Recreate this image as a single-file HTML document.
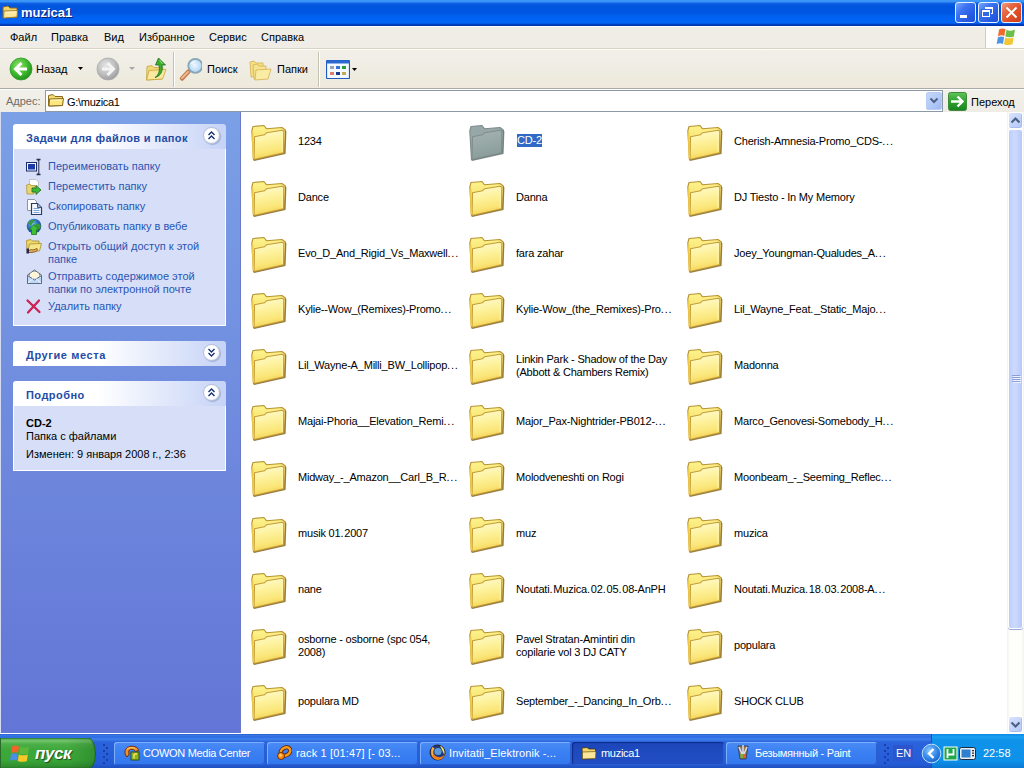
<!DOCTYPE html>
<html><head><meta charset="utf-8">
<style>
*{margin:0;padding:0;box-sizing:border-box}
html,body{width:1024px;height:768px;overflow:hidden;background:#fff;font-family:"Liberation Sans",sans-serif;font-size:11px;color:#000}
.a{position:absolute}
#title{left:0;top:0;width:1024px;height:26px;background:linear-gradient(#3d98f8 0px,#3a94f8 1.5px,#0e60e2 3.5px,#0055de 6px,#0056e2 13px,#0062f2 17px,#0064f6 23px,#0040c0 24.5px,#0030a0 26px)}
#title .t{left:21px;top:5px;color:#fff;font-weight:bold;font-size:13px;text-shadow:1px 1px 0 #0a1e6a}
.tb{top:2px;width:21px;height:21px;border:1px solid #e6f0ff;border-radius:3px;background:linear-gradient(135deg,#7aa6fa 0%,#3c74f2 35%,#2a60e6 65%,#1d4fd4 100%)}
#menu{left:0;top:26px;width:1024px;height:22px;background:#efede5;border-top:1px solid #fafcff}
#menu span{position:absolute;top:3.5px;font-size:11px;line-height:13px}
#logo{left:985px;top:27px;width:39px;height:21px;background:#fdfdfc;border-left:1px solid #cfccc0}
#tool{left:0;top:48px;width:1024px;height:41px;background:linear-gradient(#f1efe8,#efede3 50%,#eeeadc 85%,#f0e8dc)}
#addr{left:0;top:90px;width:1024px;height:22px;background:linear-gradient(#f1f0ea,#eeece4)}
#left{left:0;top:112px;width:241px;height:621px;background:linear-gradient(#7ba0e6,#6375d6)}
#files{left:241px;top:112px;width:766px;height:621px;background:#fff}
#sb{left:1007px;top:112px;width:17px;height:621px;background:linear-gradient(90deg,#f3f1ec,#fefefb 3px,#fefefb 14px,#f3f1ec)}
.sbb{left:1008px;width:15px;border:1px solid #fff;border-radius:3px;background:linear-gradient(135deg,#d8e4fe,#c1d2fb 60%,#b4c8f7);box-shadow:inset -1px -1px 0 #a9bdf0}
.sbt{left:1008px;width:15px;border:1px solid #fff;border-radius:3px;background:linear-gradient(90deg,#bccdfa,#cdd9fd 40%,#c8d6fd 60%,#b6c8f8);box-shadow:0 1px 0 #98a8d8}
#task{left:0;top:734px;width:1024px;height:34px;background:linear-gradient(#1f4fc4 0,#3c7ce8 1px,#2d6ae0 3px,#3f82ee 5px,#2b63dc 8px,#245cd8 30px,#1e4fbe 34px)}
.tt{top:63px;line-height:13px;white-space:nowrap}
.hd{width:213px;height:25px;background:linear-gradient(90deg,#fff 0%,#fff 40%,#c6d3f7 100%);border-radius:3px 3px 0 0}
.ht{left:26px;color:#1f4ba6;font-size:11px;font-weight:bold;line-height:13px;white-space:nowrap;letter-spacing:0.4px}
.bd{width:213px;background:#d6dff7;border:1px solid #fff;border-top:none}
.chev{width:17px;height:17px;border-radius:50%;background:radial-gradient(circle at 40% 35%,#fff 50%,#eef1fa);border:1px solid #b4bdd8;box-shadow:1px 1px 1px #a0acd0}
.chev svg{margin:-1px}
.chev svg{position:absolute;left:0;top:0}
.lk{left:48px;color:#2a55b4;font-size:11px;line-height:13px;white-space:nowrap}
.dt{left:26px;color:#000;font-size:11px;line-height:13px;white-space:nowrap}
.it{position:absolute;width:218px;height:56px}
.it svg{position:absolute;left:0;top:9px}
.it i{font-style:normal;letter-spacing:0.8px}
.sel{background:#316ac5;color:#fff;padding:0 0.5px;margin-left:0.5px;margin-top:-0.7px;letter-spacing:-0.45px}
.it .n{position:absolute;left:50px;line-height:13px;white-space:nowrap;letter-spacing:-0.2px}
.tk{top:742px;height:23px;border-radius:3px;background:linear-gradient(#4a8cf6,#3c81f3 40%,#3377ee);color:#fff;font-size:11px;box-shadow:inset 1px 1px 0 #7cb0ff,inset -1px -1px 0 #2a5fd0}
.act{background:linear-gradient(#1c45b8,#1e4cc0 50%,#2250c4);box-shadow:inset 1px 1px 1px #0e2a88,inset -1px -1px 0 #2c5cd0}
.tk span{position:absolute;left:29px;top:4.7px;line-height:13px;white-space:nowrap;letter-spacing:-0.3px}
</style></head><body>
<svg width="0" height="0" style="position:absolute">
<defs>
<linearGradient id="gy" x1="0" y1="0" x2="0.2" y2="1">
<stop offset="0" stop-color="#fffbd4"/><stop offset="0.45" stop-color="#fdf29c"/><stop offset="0.8" stop-color="#fae578"/><stop offset="1" stop-color="#f4d455"/></linearGradient>
<linearGradient id="gb" x1="0" y1="0" x2="0" y2="1">
<stop offset="0" stop-color="#fdf28a"/><stop offset="1" stop-color="#f2d45a"/></linearGradient>
<g id="f">
<path d="M5,4.5 L16,3.5 L18.6,6.8 L34,5.5 L37.5,8.2 L36.5,31 L5.5,38 L3.8,9 Z" fill="url(#gb)" stroke="#b89232" stroke-width="1.1" stroke-linejoin="round"/>
<path d="M6.5,14.8 L16.4,12.8 L18.6,10.7 L34,8.2 L35.8,9 L35.5,30.8 L6,37.5 Z" fill="url(#gy)" stroke="#c49c38" stroke-width="1.1" stroke-linejoin="round"/>
<path d="M4.6,10 L5.3,36.5" stroke="#eccb48" stroke-width="1.6"/>
<path d="M34.2,10 L34,30" stroke="#fff6c0" stroke-width="0.8"/>
<path d="M36.8,9 L37.8,9.5 L37,31.5 L6,38.5" fill="none" stroke="#8a7034" stroke-width="1.2" opacity="0.85"/>
</g>
<linearGradient id="ggy" x1="0" y1="0" x2="0.25" y2="1">
<stop offset="0" stop-color="#a5b4b4"/><stop offset="1" stop-color="#8a9d9a"/></linearGradient>
<g id="fg">
<path d="M5,4.5 L16,3.5 L18.6,6.8 L34,5.5 L37.5,8.2 L36.5,31 L5.5,38 L3.8,9 Z" fill="#98a8a8" stroke="#7c8a8a" stroke-width="1.1" stroke-linejoin="round"/>
<path d="M6.5,14.8 L16.4,12.8 L18.6,10.7 L34,8.2 L35.8,9 L35.5,30.8 L6,37.5 Z" fill="url(#ggy)" stroke="#7f8e8c" stroke-width="1.1" stroke-linejoin="round"/>
<path d="M36.5,9 L37.8,9.5 L37,31.5 L6,38.5" fill="none" stroke="#6a7474" stroke-width="1.2" opacity="0.8"/>
</g>
</defs></svg>

<div id="title" class="a">
  <svg class="a" style="left:1px;top:4px" width="18" height="16" viewBox="0 0 18 16">
<path d="M2,3 L7,2 L9,4 L16,4 L16,13 L2,14 Z" fill="#f3d466" stroke="#8a6420" stroke-width="1"/>
<path d="M2.5,14 L3,7 L16.5,6.5 L16,13 Z" fill="#fbe898" stroke="#a07a28" stroke-width="0.9"/>
<path d="M4,8.5 L15,8" stroke="#fff6c8" stroke-width="1"/>
</svg>
  <div class="a t">muzica1</div>
  <div class="a tb" style="left:955px"></div>
  <div class="a" style="left:960px;top:15px;width:7px;height:3px;background:#fff"></div>
  <div class="a tb" style="left:978px"></div>
  <div class="a" style="left:985px;top:7px;width:8px;height:7px;border:1px solid #fff;border-top-width:2px"></div>
  <div class="a" style="left:982px;top:10px;width:8px;height:7px;border:1px solid #fff;border-top-width:2px;background:#3068e8;box-shadow:0 0 0 1px #3068e8"></div>
  <div class="a tb" style="left:1001px;background:linear-gradient(135deg,#f0a088 0%,#e76a44 30%,#e0502a 60%,#c8401c 100%)"></div>
  <svg class="a" style="left:1001px;top:2px" width="21" height="21"><path d="M5.5,5.5 L15.5,15.5 M15.5,5.5 L5.5,15.5" stroke="#fff" stroke-width="2"/></svg>
</div>

<div id="menu" class="a">
  <span style="left:10px">Файл</span>
  <span style="left:51px">Правка</span>
  <span style="left:104px">Вид</span>
  <span style="left:139px">Избранное</span>
  <span style="left:209px">Сервис</span>
  <span style="left:261px">Справка</span>
</div>
<div id="logo" class="a"></div>
<svg class="a" style="left:995px;top:27px" width="22" height="20" viewBox="0 0 22 20">
<path d="M4,2.5 C6.5,1 8.5,1.2 10.5,2.3 L9.3,9 C7.3,8 5.3,8 3,9.5 Z" fill="#f06a30"/>
<path d="M11.5,2.8 C14,4 16.5,4 20,2.5 L18.8,9.5 C16,10.7 13,10.5 10.3,9.5 Z" fill="#6cc04a"/>
<path d="M2.8,10.5 C5,9.2 7.2,9.1 9.1,10.1 L8,17 C6,16 3.8,16 1.7,17.3 Z" fill="#4c94e8"/>
<path d="M10.1,10.5 C12.8,11.6 15.6,11.7 18.6,10.5 L17.5,17.3 C14.5,18.5 11.7,18.3 9,17.2 Z" fill="#f4c634"/>
</svg>

<div id="tool" class="a"></div>
<div class="a" style="left:0;top:48px;width:1024px;height:1px;background:#d5d2c6"></div>
<div class="a" style="left:0;top:49px;width:1024px;height:1px;background:#fefdf6"></div>
<div class="a" style="left:0;top:88px;width:1024px;height:1px;background:#a9aba6"></div>
<div class="a" style="left:0;top:89px;width:1024px;height:1px;background:#fefefc"></div>
<!-- back -->
<svg class="a" style="left:9px;top:57px" width="24" height="24" viewBox="0 0 24 24">
<defs><radialGradient id="gg" cx="0.4" cy="0.35" r="0.7"><stop offset="0" stop-color="#8fe36a"/><stop offset="0.6" stop-color="#3cb72c"/><stop offset="1" stop-color="#1f8a1c"/></radialGradient>
<radialGradient id="gr" cx="0.4" cy="0.35" r="0.7"><stop offset="0" stop-color="#e6e6e6"/><stop offset="0.6" stop-color="#bdbdbd"/><stop offset="1" stop-color="#9a9a9a"/></radialGradient></defs>
<circle cx="12" cy="12" r="11" fill="url(#gg)" stroke="#2f9a28" stroke-width="0.8"/>
<path d="M12.5,6 L6.5,12 L12.5,18 M7,12 L18,12" fill="none" stroke="#fff" stroke-width="3" stroke-linecap="butt"/>
</svg>
<div class="a tt" style="left:36px">Назад</div>
<svg class="a" style="left:78px;top:67px" width="6" height="4"><path d="M0,0 L5,0 L2.5,3 Z" fill="#000"/></svg>
<!-- forward -->
<svg class="a" style="left:96px;top:57px" width="24" height="24" viewBox="0 0 24 24">
<circle cx="12" cy="12" r="11" fill="url(#gr)" stroke="#a9a9a9" stroke-width="0.8"/>
<path d="M11.5,6 L17.5,12 L11.5,18 M17,12 L6,12" fill="none" stroke="#f4f4f4" stroke-width="3"/>
</svg>
<svg class="a" style="left:129px;top:67px" width="7" height="4"><path d="M0,0 L6,0 L3,3 Z" fill="#a6a6a6"/></svg>
<!-- up -->
<svg class="a" style="left:145px;top:57px" width="22" height="24" viewBox="0 0 22 24">
<path d="M2,9.5 L7,8.5 L9,10.5 L18,10.5 L17,22 L1.5,23 Z" fill="#f0d878" stroke="#c8a33a" stroke-width="0.8"/>
<path d="M1.5,23 L4,13.5 L21,12.5 L17.5,22 Z" fill="#f9e9a0" stroke="#c8a33a" stroke-width="0.8"/>
<path d="M6.5,14 L12,13.5" stroke="#e8c860" stroke-width="0.8"/>
<path d="M10,20.5 C14,18 15,13 14,8 L10.5,8 L13.5,1 L20.5,8 L17,8 C18,14 16,19 10,20.5 Z" fill="#3cad2e" stroke="#1c6e1a" stroke-width="0.8" stroke-linejoin="round"/>
<path d="M14.5,3 L17.5,7" stroke="#8ee07a" stroke-width="1"/>
</svg>
<div class="a" style="left:173px;top:52px;width:1px;height:35px;background:#c5c2b2"></div>
<div class="a" style="left:174px;top:52px;width:1px;height:35px;background:#fff"></div>
<!-- search -->
<svg class="a" style="left:178px;top:56px" width="24" height="26" viewBox="0 0 24 26">
<defs><radialGradient id="lens" cx="0.45" cy="0.45" r="0.6"><stop offset="0" stop-color="#eef8ff"/><stop offset="1" stop-color="#a6d2f2"/></radialGradient></defs>
<path d="M4,22.5 L10.5,15.5" stroke="#c27c50" stroke-width="4.4" stroke-linecap="round"/>
<path d="M4,22 L10,15.8" stroke="#f0bc94" stroke-width="1.8" stroke-linecap="round"/>
<circle cx="17.3" cy="9.8" r="7" fill="url(#lens)" stroke="#8aa4b8" stroke-width="1.8"/>
<path d="M13.5,8 C14,6.5 15.5,5.5 17,5.5" fill="none" stroke="#fff" stroke-width="1.2"/>
</svg>
<div class="a tt" style="left:207px">Поиск</div>
<!-- folders -->
<svg class="a" style="left:249px;top:59px" width="24" height="22" viewBox="0 0 24 22">
<path d="M1,3 L5,2 L7,4 L14,4 L14,16 L2,18 Z" fill="#f5df86" stroke="#d2b150" stroke-width="0.8"/>
<path d="M4,6 L8,5 L10,7 L17,7 L17,19 L5,20 Z" fill="#f7e38f" stroke="#d2b150" stroke-width="0.8"/>
<path d="M6,21 L7,11 L22,10 L19,20 Z" fill="#fbeca4" stroke="#d2b150" stroke-width="0.8"/>
</svg>
<div class="a tt" style="left:277px">Папки</div>
<div class="a" style="left:318px;top:52px;width:1px;height:35px;background:#c5c2b2"></div>
<div class="a" style="left:319px;top:52px;width:1px;height:35px;background:#fff"></div>
<!-- views -->
<svg class="a" style="left:326px;top:60px" width="24" height="19" viewBox="0 0 24 19">
<rect x="0.5" y="0.5" width="23" height="18" rx="1" fill="#f4f8ff" stroke="#1f5ac4" stroke-width="1.2"/>
<rect x="0.5" y="0.5" width="23" height="3" fill="#2a68d0"/>
<rect x="4" y="6" width="4" height="3" fill="#9aa2b6"/><rect x="10" y="6" width="4" height="3" fill="#3574d6"/><rect x="16" y="6" width="4" height="3" fill="#2a9a3a"/>
<rect x="4" y="12" width="4" height="3" fill="#e07c6c"/><rect x="10" y="12" width="4" height="3" fill="#1c3a8c"/><rect x="16" y="12" width="4" height="3" fill="#c0aa5a"/>
</svg>
<svg class="a" style="left:352px;top:68px" width="6" height="4"><path d="M0,0 L5,0 L2.5,3 Z" fill="#000"/></svg>
<div id="addr" class="a"></div>
<div class="a" style="left:6px;top:94.8px;color:#6f6d66;line-height:13px">Адрес:</div>
<div class="a" style="left:45px;top:90px;width:898px;height:22px;background:#fff;border:1px solid #8c98a4"></div>
<svg class="a" style="left:47px;top:93px" width="18" height="15" viewBox="0 0 18 15">
<path d="M1.5,2.5 L6,1.5 L8,3.5 L15.5,3.5 L15.5,12.5 L1.5,13 Z" fill="#f6dc70" stroke="#8a6a20" stroke-width="1"/>
<path d="M2,13 L2.5,6 L16.5,5.5 L15.5,12.5 Z" fill="#fbe680" stroke="#8a6a20" stroke-width="1"/>
<path d="M3.5,7.3 L14.5,7" stroke="#fff8c0" stroke-width="1"/>
</svg>
<div class="a" style="left:67px;top:95.7px;line-height:13px;letter-spacing:-0.3px">G:\muzica1</div>
<div class="a" style="left:926px;top:92px;width:16px;height:18px;border-radius:2px;background:linear-gradient(135deg,#c4d7fb,#b0c8f6 60%,#9cb8f0);border:1px solid #b9ccf3"></div>
<svg class="a" style="left:929px;top:97px" width="10" height="8"><path d="M1.5,1.5 L5,5 L8.5,1.5" fill="none" stroke="#4d6185" stroke-width="2"/></svg>
<svg class="a" style="left:948px;top:92px" width="20" height="19" viewBox="0 0 20 19">
<defs><linearGradient id="go" x1="0" y1="0" x2="0" y2="1"><stop offset="0" stop-color="#5fc45a"/><stop offset="0.5" stop-color="#2ea12c"/><stop offset="1" stop-color="#1b8420"/></linearGradient></defs>
<rect x="0.5" y="0.5" width="18" height="18" rx="2" fill="url(#go)" stroke="#3a8c3a" stroke-width="1"/>
<path d="M3,9.5 L14,9.5 M9.5,4.5 L14.5,9.5 L9.5,14.5" fill="none" stroke="#fff" stroke-width="2.4"/>
</svg>
<div class="a" style="left:971px;top:95.7px;line-height:13px">Переход</div>

<div id="left" class="a"></div>
<div class="a" style="left:0;top:112px;width:1px;height:621px;background:#d4dcf2"></div>
<!-- box1 -->
<div class="a hd" style="left:13px;top:124px"></div>
<div class="a ht" style="top:132px;letter-spacing:0.36px">Задачи для файлов и папок</div>
<div class="a chev" style="left:203px;top:127px"><svg width="17" height="17"><path d="M5.5,8 L8.5,5 L11.5,8 M5.5,12 L8.5,9 L11.5,12" fill="none" stroke="#142f70" stroke-width="1.35"/></svg></div>
<div class="a bd" style="left:13px;top:149px;height:177px"></div>
<div class="a lk" style="top:159.7px">Переименовать папку</div>
<div class="a lk" style="top:179.7px">Переместить папку</div>
<div class="a lk" style="top:199.7px">Скопировать папку</div>
<div class="a lk" style="top:220px">Опубликовать папку в вебе</div>
<div class="a lk" style="top:240px">Открыть общий доступ к этой<br>папке</div>
<div class="a lk" style="top:270.3px">Отправить содержимое этой<br>папки по электронной почте</div>
<div class="a lk" style="top:300px">Удалить папку</div>
<!-- task icons -->
<svg class="a" style="left:25px;top:158px" width="18" height="18" viewBox="0 0 18 18">
<rect x="1.5" y="4.5" width="10" height="8.5" fill="#f4f6ff" stroke="#1a2a6a" stroke-width="1"/>
<rect x="3" y="6" width="7" height="5.5" fill="#1c3aa8"/>
<path d="M11.5,1.5 L15.5,1.5 M13.5,1.5 L13.5,16.5 M11.5,16.5 L15.5,16.5" stroke="#2a3050" stroke-width="1.6"/>
<path d="M12.8,3 L12.8,15" stroke="#fff" stroke-width="0.8"/>
</svg>
<svg class="a" style="left:25px;top:178px" width="18" height="18" viewBox="0 0 18 18">
<path d="M4.5,1.5 L11,1.5 L13.5,4 L13.5,8 L4.5,8 Z" fill="#fff" stroke="#b8b8c0" stroke-width="0.8"/>
<path d="M1.5,7 L5,6 L6,7.5 L10,7.5 L9,16 L2,16 Z" fill="#e8d470" stroke="#b09a38" stroke-width="0.8"/>
<path d="M7,10 L11,10 L11,7.5 L16,12 L11,16.5 L11,14 L7,14 Z" fill="#3cb83a" stroke="#1f6a1c" stroke-width="0.8"/>
</svg>
<svg class="a" style="left:26px;top:198px" width="17" height="18" viewBox="0 0 17 18">
<path d="M1.5,1.5 L8.5,1.5 L10.5,3.5 L10.5,12.5 L1.5,12.5 Z" fill="#fff" stroke="#8a96a8" stroke-width="1"/>
<path d="M5.5,5.5 L11.5,5.5 L15.5,9.5 L15.5,16.5 L5.5,16.5 Z" fill="#f4f8ff" stroke="#2a3a60" stroke-width="1.2"/>
<path d="M11.5,5.5 L11.5,9.5 L15.5,9.5" fill="#9ab0d8" stroke="#2a3a60" stroke-width="0.8"/>
<path d="M7.5,10.5 H13.5 M7.5,12.5 H13.5 M7.5,14.5 H13.5" stroke="#6a9ad8" stroke-width="0.9"/>
</svg>
<svg class="a" style="left:26px;top:218px" width="17" height="18" viewBox="0 0 17 18">
<defs><radialGradient id="glb" cx="0.4" cy="0.35" r="0.7"><stop offset="0" stop-color="#7ac2f0"/><stop offset="0.5" stop-color="#2a70c0"/><stop offset="1" stop-color="#14408a"/></radialGradient></defs>
<circle cx="8" cy="8" r="7.3" fill="url(#glb)"/>
<path d="M2,5 C4,2 7,1.5 9,2 C8,4 6,5 5,8 C4,7 3,6 2,5 Z M10,6 C12,5 14,6 15,8 C14,11 12,13 10,14 C11,11 10,9 10,6 Z" fill="#3a9a3a"/>
<path d="M8,6.5 L13,11.5 L10.5,11.5 L10.5,16.5 L5.5,16.5 L5.5,11.5 L3,11.5 Z" fill="#3fbe38" stroke="#1a7a1a" stroke-width="0.8"/>
</svg>
<svg class="a" style="left:25px;top:238px" width="18" height="16" viewBox="0 0 18 16">
<path d="M1.5,2.5 L6,1.5 L7.5,3 L14,3 L14,12 L2,13 Z" fill="#eed868" stroke="#a88a30" stroke-width="0.8"/>
<path d="M3,13 L4.5,6 L16.5,5.5 L14.5,13 Z" fill="#f6e68a" stroke="#a88a30" stroke-width="0.8"/>
<path d="M2,14.5 C4,12 6,11 8,12 L12,10.5 C13,11.5 12,13 11,13.5 L7,14.5 Z" fill="#e4b060" stroke="#7a4a10" stroke-width="0.8"/>
<rect x="1.5" y="10.5" width="2.5" height="5" fill="#2a2a50"/>
</svg>
<svg class="a" style="left:26px;top:268px" width="17" height="17" viewBox="0 0 17 17">
<path d="M3,7 L8.5,3 L14,7 Z" fill="#f0e0b0" stroke="#8a7a5a" stroke-width="0.7"/>
<rect x="4" y="4" width="9" height="6" fill="#fff6d8"/>
<path d="M1.5,7 L8.5,2 L15.5,7 L15.5,15.5 L1.5,15.5 Z" fill="none" stroke="#5a6a8a" stroke-width="1"/>
<path d="M1.5,7.5 L8.5,12 L15.5,7.5 L15.5,15.5 L1.5,15.5 Z" fill="#c0d8f4" stroke="#5a6a8a" stroke-width="1"/>
<path d="M2,15 L7,10.5 M15,15 L10,10.5" stroke="#f0f8ff" stroke-width="1"/>
</svg>
<svg class="a" style="left:25px;top:298px" width="17" height="17" viewBox="0 0 17 17">
<path d="M2.5,2.5 L14.5,14 M14,2.5 L3,14.5" stroke="#c01848" stroke-width="2.2" stroke-linecap="round"/>
<path d="M2.5,2.5 L14.5,14 M14,2.5 L3,14.5" stroke="#e0306a" stroke-width="0.8" stroke-linecap="round"/>
</svg>
<!-- box2 -->
<div class="a hd" style="left:13px;top:341px"></div>
<div class="a ht" style="top:349px;letter-spacing:0.6px">Другие места</div>
<div class="a chev" style="left:203px;top:344px"><svg width="17" height="17"><path d="M5.5,5 L8.5,8 L11.5,5 M5.5,9 L8.5,12 L11.5,9" fill="none" stroke="#142f70" stroke-width="1.35"/></svg></div>
<!-- box3 -->
<div class="a hd" style="left:13px;top:381px"></div>
<div class="a ht" style="top:388.5px;letter-spacing:0.45px">Подробно</div>
<div class="a chev" style="left:203px;top:384px"><svg width="17" height="17"><path d="M5.5,8 L8.5,5 L11.5,8 M5.5,12 L8.5,9 L11.5,12" fill="none" stroke="#142f70" stroke-width="1.35"/></svg></div>
<div class="a bd" style="left:13px;top:406px;height:65px"></div>
<div class="a dt" style="top:416.7px;font-weight:bold">CD-2</div>
<div class="a dt" style="top:429.7px">Папка с файлами</div>
<div class="a dt" style="top:447.7px">Изменен: 9 января 2008 г., 2:36</div>

<div class="a" style="left:240px;top:112px;width:1px;height:621px;background:#6a7ac8"></div>
<div id="files" class="a">
<div class="it" style="left:7px;top:1px"><svg width="42" height="42"><use href="#f"/></svg><div class="n" style="top:21.5px">1234</div></div>
<div class="it" style="left:225px;top:1px"><svg width="42" height="42"><use href="#fg"/></svg><div class="n sel" style="top:21.5px">CD-2</div></div>
<div class="it" style="left:443px;top:1px"><svg width="42" height="42"><use href="#f"/></svg><div class="n" style="top:21.5px">Cherish-Amnesia-Promo_CDS-<i>.</i><i>.</i><i>.</i></div></div>
<div class="it" style="left:7px;top:57px"><svg width="42" height="42"><use href="#f"/></svg><div class="n" style="top:21.5px">Dance</div></div>
<div class="it" style="left:225px;top:57px"><svg width="42" height="42"><use href="#f"/></svg><div class="n" style="top:21.5px">Danna</div></div>
<div class="it" style="left:443px;top:57px"><svg width="42" height="42"><use href="#f"/></svg><div class="n" style="top:21.5px">DJ Tiesto - In My Memory</div></div>
<div class="it" style="left:7px;top:113px"><svg width="42" height="42"><use href="#f"/></svg><div class="n" style="top:21.5px">Evo_D_And_Rigid_Vs_Maxwell<i>.</i><i>.</i><i>.</i></div></div>
<div class="it" style="left:225px;top:113px"><svg width="42" height="42"><use href="#f"/></svg><div class="n" style="top:21.5px">fara zahar</div></div>
<div class="it" style="left:443px;top:113px"><svg width="42" height="42"><use href="#f"/></svg><div class="n" style="top:21.5px">Joey_Youngman-Qualudes_A<i>.</i><i>.</i><i>.</i></div></div>
<div class="it" style="left:7px;top:169px"><svg width="42" height="42"><use href="#f"/></svg><div class="n" style="top:21.5px">Kylie--Wow_(Remixes)-Promo<i>.</i><i>.</i><i>.</i></div></div>
<div class="it" style="left:225px;top:169px"><svg width="42" height="42"><use href="#f"/></svg><div class="n" style="top:21.5px">Kylie-Wow_(the_Remixes)-Pro<i>.</i><i>.</i><i>.</i></div></div>
<div class="it" style="left:443px;top:169px"><svg width="42" height="42"><use href="#f"/></svg><div class="n" style="top:21.5px">Lil_Wayne_Feat<i>.</i>_Static_Majo<i>.</i><i>.</i><i>.</i></div></div>
<div class="it" style="left:7px;top:225px"><svg width="42" height="42"><use href="#f"/></svg><div class="n" style="top:21.5px">Lil_Wayne-A_Milli_BW_Lollipop<i>.</i><i>.</i><i>.</i></div></div>
<div class="it" style="left:225px;top:225px"><svg width="42" height="42"><use href="#f"/></svg><div class="n" style="top:16px">Linkin Park - Shadow of the Day<br>(Abbott &amp; Chambers Remix)</div></div>
<div class="it" style="left:443px;top:225px"><svg width="42" height="42"><use href="#f"/></svg><div class="n" style="top:21.5px">Madonna</div></div>
<div class="it" style="left:7px;top:281px"><svg width="42" height="42"><use href="#f"/></svg><div class="n" style="top:21.5px">Majai-Phoria__Elevation_Remi<i>.</i><i>.</i><i>.</i></div></div>
<div class="it" style="left:225px;top:281px"><svg width="42" height="42"><use href="#f"/></svg><div class="n" style="top:21.5px">Major_Pax-Nightrider-PB012-<i>.</i><i>.</i><i>.</i></div></div>
<div class="it" style="left:443px;top:281px"><svg width="42" height="42"><use href="#f"/></svg><div class="n" style="top:21.5px">Marco_Genovesi-Somebody_H<i>.</i><i>.</i><i>.</i></div></div>
<div class="it" style="left:7px;top:337px"><svg width="42" height="42"><use href="#f"/></svg><div class="n" style="top:21.5px">Midway_-_Amazon__Carl_B_R<i>.</i><i>.</i><i>.</i></div></div>
<div class="it" style="left:225px;top:337px"><svg width="42" height="42"><use href="#f"/></svg><div class="n" style="top:21.5px">Molodveneshti on Rogi</div></div>
<div class="it" style="left:443px;top:337px"><svg width="42" height="42"><use href="#f"/></svg><div class="n" style="top:21.5px">Moonbeam_-_Seeming_Reflec<i>.</i><i>.</i><i>.</i></div></div>
<div class="it" style="left:7px;top:393px"><svg width="42" height="42"><use href="#f"/></svg><div class="n" style="top:21.5px">musik 01<i>.</i>2007</div></div>
<div class="it" style="left:225px;top:393px"><svg width="42" height="42"><use href="#f"/></svg><div class="n" style="top:21.5px">muz</div></div>
<div class="it" style="left:443px;top:393px"><svg width="42" height="42"><use href="#f"/></svg><div class="n" style="top:21.5px">muzica</div></div>
<div class="it" style="left:7px;top:449px"><svg width="42" height="42"><use href="#f"/></svg><div class="n" style="top:21.5px">nane</div></div>
<div class="it" style="left:225px;top:449px"><svg width="42" height="42"><use href="#f"/></svg><div class="n" style="top:21.5px">Noutati<i>.</i>Muzica<i>.</i>02<i>.</i>05<i>.</i>08-AnPH</div></div>
<div class="it" style="left:443px;top:449px"><svg width="42" height="42"><use href="#f"/></svg><div class="n" style="top:21.5px">Noutati<i>.</i>Muzica<i>.</i>18<i>.</i>03<i>.</i>2008-A<i>.</i><i>.</i><i>.</i></div></div>
<div class="it" style="left:7px;top:505px"><svg width="42" height="42"><use href="#f"/></svg><div class="n" style="top:16px">osborne - osborne (spc 054,<br>2008)</div></div>
<div class="it" style="left:225px;top:505px"><svg width="42" height="42"><use href="#f"/></svg><div class="n" style="top:16px">Pavel Stratan-Amintiri din<br>copilarie vol 3 DJ CATY</div></div>
<div class="it" style="left:443px;top:505px"><svg width="42" height="42"><use href="#f"/></svg><div class="n" style="top:21.5px">populara</div></div>
<div class="it" style="left:7px;top:561px"><svg width="42" height="42"><use href="#f"/></svg><div class="n" style="top:21.5px">populara MD</div></div>
<div class="it" style="left:225px;top:561px"><svg width="42" height="42"><use href="#f"/></svg><div class="n" style="top:21.5px">September_-_Dancing_In_Orb<i>.</i><i>.</i><i>.</i></div></div>
<div class="it" style="left:443px;top:561px"><svg width="42" height="42"><use href="#f"/></svg><div class="n" style="top:21.5px">SHOCK CLUB</div></div>
</div>
<div id="sb" class="a"></div>
<div class="a sbb" style="top:112px;height:17px"></div>
<svg class="a" style="left:1008px;top:112px" width="15" height="17"><path d="M3.5,10.5 L7.5,6.5 L11.5,10.5" fill="none" stroke="#4d6185" stroke-width="2.2"/></svg>
<div class="a sbt" style="top:129px;height:500px"></div>
<svg class="a" style="left:1010px;top:374px" width="12" height="10"><g stroke="#8a9fd8" stroke-width="1"><path d="M2,1.5 H10 M2,3.5 H10 M2,5.5 H10 M2,7.5 H10"/></g><g stroke="#eef2ff" stroke-width="1"><path d="M3,2.5 H11 M3,4.5 H11 M3,6.5 H11 M3,8.5 H11"/></g></svg>
<div class="a sbb" style="top:716px;height:17px"></div>
<svg class="a" style="left:1008px;top:716px" width="15" height="17"><path d="M3.5,6.5 L7.5,10.5 L11.5,6.5" fill="none" stroke="#4d6185" stroke-width="2.2"/></svg>
<div class="a" style="left:0;top:733px;width:1024px;height:1px;background:#fff"></div>
<div id="task" class="a"></div>
<!-- start button -->
<div class="a" style="left:0;top:738px;width:96px;height:30px;border-radius:0 7px 6px 0/0 16px 14px 0;background:linear-gradient(90deg,rgba(255,255,255,0) 70%,rgba(0,40,0,0.18) 100%),linear-gradient(#2a7a2a 0,#62b25e 1.5px,#72c46c 3px,#4cae48 6px,#3da83a 12px,#3aa638 22px,#329532 27px,#2b822b 30px);box-shadow:inset -1px 0 1px #1d5a1f,inset 1px 0 0 #2a6a2a"></div>
<svg class="a" style="left:10px;top:744px" width="21" height="19" viewBox="0 0 21 19">
<path d="M2,2.5 C4.5,1 7,1.5 9,2.5 L8,9 C6,8 3.5,8 1,9.5 Z" fill="#f0642a"/>
<path d="M10,2.8 C12.5,4 15,4.2 19,2.5 L18,9.5 C15,10.8 12,10.5 9,9.5 Z" fill="#5cb83a"/>
<path d="M0.8,10.5 C3.5,9 6,9 7.8,10 L6.8,16.5 C4.5,15.5 2,15.5 0,17 Z" fill="#4a8ee6"/>
<path d="M8.8,10.5 C11.5,11.5 14.5,11.8 17.8,10.5 L16.8,17 C13.5,18.3 10.5,18 7.8,17 Z" fill="#f7c82a"/>
</svg>
<div class="a" style="left:35px;top:744px;color:#fff;font-size:17px;font-weight:bold;font-style:italic;line-height:20px;letter-spacing:-0.4px;text-shadow:1px 1px 1px #1d4f1d">пуск</div>
<!-- grip -->
<svg class="a" style="left:102px;top:743px" width="7" height="22">
<g fill="#1a3ea8"><rect x="1" y="1" width="2" height="2"/><rect x="4" y="4" width="2" height="2"/><rect x="1" y="7" width="2" height="2"/><rect x="4" y="10" width="2" height="2"/><rect x="1" y="13" width="2" height="2"/><rect x="4" y="16" width="2" height="2"/><rect x="1" y="19" width="2" height="2"/></g></svg>
<div class="a tk" style="left:114px;width:151px"><span>COWON Media Center</span></div>
<svg class="a" style="left:124px;top:745px" width="16" height="16" viewBox="0 0 16 16">
<path d="M1,7 C1,3 4.5,1 8.5,1.2 C12,1.5 14.5,3.2 14.5,5.5 L11.5,6.5 C10.5,4.5 8.5,4 6.5,4.5 C4.5,5 4.2,7 5.2,9 L3,12 C1.6,11 1,9 1,7 Z" fill="#f5901e" stroke="#6a2008" stroke-width="0.9"/>
<path d="M3,4 C5,2.5 9,2.3 11,3.5" stroke="#ffd070" stroke-width="1" fill="none"/>
<rect x="7" y="7" width="8" height="8" fill="#8ab428" stroke="#2a4a08" stroke-width="0.9"/>
<path d="M10,9 L10,13.5 M10,9 L13,9" stroke="#ffe060" stroke-width="1.4"/>
</svg>
<div class="a tk" style="left:267px;width:151px"><span style="letter-spacing:0.15px">rack 1 [01:47] [- 03...</span></div>
<svg class="a" style="left:276px;top:745px" width="16" height="16" viewBox="0 0 16 16">
<ellipse cx="9.5" cy="6.5" rx="5" ry="3.8" transform="rotate(-30 9.5 6.5)" fill="none" stroke="#5a1a08" stroke-width="4.2"/>
<ellipse cx="9.5" cy="6.5" rx="5" ry="3.8" transform="rotate(-30 9.5 6.5)" fill="none" stroke="#f39a1a" stroke-width="2.6"/>
<circle cx="5" cy="11" r="3.5" fill="#ff8a10" stroke="#5a1a08" stroke-width="0.8"/>
<circle cx="4.5" cy="10.3" r="1.5" fill="#ffd060"/>
</svg>
<div class="a tk" style="left:420px;width:151px"><span style="letter-spacing:0.1px">Invitatii_Elektronik -...</span></div>
<svg class="a" style="left:429px;top:744px" width="17" height="17" viewBox="0 0 17 17">
<circle cx="8.5" cy="8.5" r="7.5" fill="#203a80" stroke="#2a1408" stroke-width="0.9"/>
<circle cx="9" cy="7.5" r="3.6" fill="#5a9ad8"/>
<path d="M3.5,3 C0.5,7 1.5,13.5 6.5,15.5 C11,17 15,14 16,10 C13.5,13.5 9.5,14 6.5,12 C4,10 3.5,6.5 5.5,4.5 C4.5,4.2 4,3.8 3.5,3 Z" fill="#f2801a"/>
<path d="M3.5,3 C2,6 2,10 4,12.5 C3.5,9 4,6 5.5,4.5 Z" fill="#f8b040"/>
<path d="M11,1.8 C14.5,3 16.2,7 15.3,10.5 C14,8.5 13,5 11,1.8 Z" fill="#f8e860"/>
</svg>
<div class="a tk act" style="left:572px;width:152px"><span>muzica1</span></div>
<svg class="a" style="left:581px;top:746px" width="16" height="14" viewBox="0 0 16 14">
<path d="M1,2 L6,1.5 L8,3 L14.5,3 L14.5,12.5 L1.5,13 Z" fill="#f5d66a" stroke="#403010" stroke-width="0.8"/>
<path d="M1.5,13 L1.5,6 L15,5.5 L14.5,12.5 Z" fill="#fbe89a" stroke="#6a5418" stroke-width="0.7"/>
</svg>
<div class="a tk" style="left:726px;width:151px"><span>Безымянный - Paint</span></div>
<svg class="a" style="left:735px;top:744px" width="16" height="17" viewBox="0 0 16 17">
<path d="M3,2 L13,2 L11,15 L5,15 Z" fill="#8c7a50" stroke="#2a2a40" stroke-width="0.7"/>
<path d="M4,3 L7,10 M8,1 L8,10 M12,3 L9,10" stroke="#d8d8f0" stroke-width="1.6"/>
<path d="M5,10 L11,10 L10.5,14 L5.5,14 Z" fill="#7fae3a"/>
<path d="M8,10 L11,10 L10.5,14 L8,14 Z" fill="#e0602a"/>
</svg>
<!-- tray -->
<svg class="a" style="left:883px;top:743px" width="7" height="22">
<g fill="#1a3ea8"><rect x="1" y="1" width="2" height="2"/><rect x="4" y="4" width="2" height="2"/><rect x="1" y="7" width="2" height="2"/><rect x="4" y="10" width="2" height="2"/><rect x="1" y="13" width="2" height="2"/><rect x="4" y="16" width="2" height="2"/><rect x="1" y="19" width="2" height="2"/></g></svg>
<div class="a" style="left:893px;top:745px;width:20px;height:16px;background:#2b55cc"></div>
<div class="a" style="left:896px;top:746.7px;color:#fff;line-height:13px">EN</div>
<div class="a" style="left:931px;top:734px;width:93px;height:34px;background:linear-gradient(#0c8ae8 0,#19a0f2 3px,#0f93ea 6px,#0e91e8 27px,#0b78d4 34px);border-left:1px solid #0a5ac0"></div>
<svg class="a" style="left:921px;top:743px" width="21" height="21" viewBox="0 0 21 21">
<defs><radialGradient id="ab" cx="0.4" cy="0.35" r="0.7"><stop offset="0" stop-color="#8ac6ff"/><stop offset="0.6" stop-color="#2f86e8"/><stop offset="1" stop-color="#1a5cc4"/></radialGradient></defs>
<circle cx="10.5" cy="10.5" r="9.3" fill="url(#ab)" stroke="#c2e2ff" stroke-width="1"/>
<path d="M12.5,6 L8,10.5 L12.5,15" fill="none" stroke="#fff" stroke-width="2.4"/>
</svg>
<svg class="a" style="left:943px;top:746px" width="15" height="15" viewBox="0 0 15 15">
<rect x="0.5" y="0.5" width="14" height="14" fill="#fff"/>
<rect x="1.5" y="1.5" width="12" height="12" fill="#1ea84a"/>
<path d="M4.5,3 V12 M4.5,8.5 H10.5 M10.5,3 V9.5" fill="none" stroke="#fff" stroke-width="1.8"/>
</svg>
<svg class="a" style="left:959px;top:747px" width="17" height="13" viewBox="0 0 17 13">
<rect x="0.5" y="0.5" width="16" height="12" rx="2" fill="#e8eef4" stroke="#1a2a40" stroke-width="1"/>
<rect x="2.5" y="2.5" width="9" height="8" fill="#2e7fd0"/>
<rect x="13" y="3" width="2" height="1.3" fill="#333"/><rect x="13" y="5.5" width="2" height="1.3" fill="#333"/><rect x="13" y="8" width="2" height="1.3" fill="#333"/>
</svg>
<div class="a" style="left:983px;top:746.7px;color:#fff;line-height:13px">22:58</div>

</body></html>
